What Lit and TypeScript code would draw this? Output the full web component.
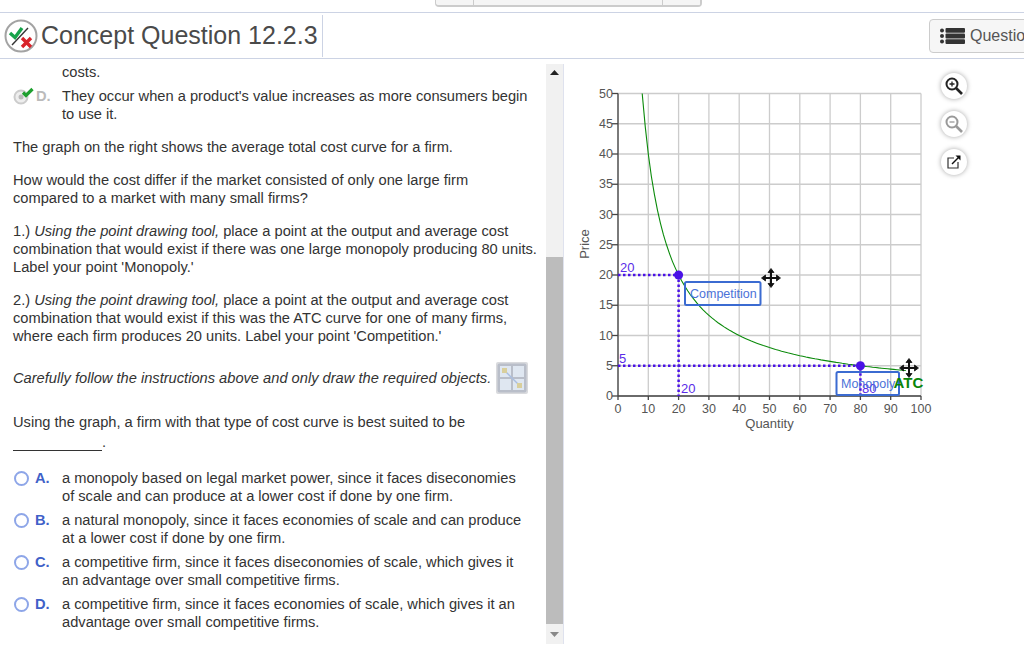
import { LitElement, html, css, svg } from "lit";
import { customElement } from "lit/decorators.js";

const X = (q: number) => 618 - 564 + q * 3.03;
const Y = (p: number) => 396 - 59 - p * 6.05;

const OPTIONS = [
  ["A.", "a monopoly based on legal market power, since it faces diseconomies", "of scale and can produce at a lower cost if done by one firm."],
  ["B.", "a natural monopoly, since it faces economies of scale and can produce", "at a lower cost if done by one firm."],
  ["C.", "a competitive firm, since it faces diseconomies of scale, which gives it", "an advantage over small competitive firms."],
  ["D.", "a competitive firm, since it faces economies of scale, which gives it an", "advantage over small competitive firms."],
];

function moveIcon(x: number, y: number) {
  return svg`<g transform="translate(${x} ${y})" class="move">
    <path d="M-7 0H7M0 -7V7" />
    <path class="head" d="M0 -9.5L-3 -5.5H3ZM0 9.5L-3 5.5H3ZM-9.5 0L-5.5 -3V3ZM9.5 0L5.5 -3V3Z" />
  </g>`;
}

@customElement("app-root")
export class AppRoot extends LitElement {
  static styles = css`
    :host { display: block; width: 1024px; height: 659px; overflow: hidden; background: #fff; font-family: "Liberation Sans", Arial, sans-serif; color: #333; }
    .tabs { display: flex; margin-left: 435px; width: 267px; height: 7px; box-sizing: border-box; background: #f5f5f5; border: 1px solid #ccc; border-top: 0; border-bottom-width: 2px; border-radius: 0 0 4px 4px; }
    .tabs i { display: block; width: 37px; border-right: 1px solid #ccc; }
    .tabs b { display: block; flex: 1; border-right: 1px solid #ccc; }
    .header { margin-top: 5px; height: 47px; box-sizing: border-box; border-top: 1px solid #ccd3e4; border-bottom: 1px solid #ccd3e4; display: flex; align-items: center; position: relative; }
    .logo { margin-left: 4px; width: 34px; height: 34px; flex: none; }
    .title { margin-left: 3px; font-size: 25px; color: #4a4a4a; white-space: nowrap; width: 281px; height: 42px; line-height: 40px; border-right: 1px solid #ccd3e4; flex: none; }
    .qbtn { margin-left: auto; width: 110px; margin-right: -15px; height: 34px; box-sizing: border-box; border: 1px solid #ccc; border-radius: 4px; background: #f6f6f6; display: flex; align-items: center; gap: 5px; padding-left: 10px; font-size: 16px; color: #555; flex: none; overflow: hidden; }
    .qbtn svg { flex: none; }
    .body { display: flex; height: 600px; }
    .left { width: 546px; flex: none; height: 585px; overflow: hidden; font-size: 14.67px; line-height: 18px; color: #333; padding: 4px 0 0 13px; box-sizing: border-box; }
    .opt { display: flex; align-items: flex-start; }
    .radio { width: 15px; height: 15px; border: 2px solid #8ea6e8; border-radius: 50%; box-sizing: border-box; margin: 2px 0 0 1px; flex: none; }
    .letter { font-weight: bold; color: #3f61c8; margin-left: 6px; width: 27px; flex: none; }
    .optext { white-space: nowrap; }
    .opts { margin-top: 18px; display: flex; flex-direction: column; gap: 6px; }
    .cont { margin-left: 49px; }
    .chosen { margin-top: 6px; }
    .chosen .letter { color: #bbb; margin-left: 9px; width: 26px; }
    .radio-wrap { width: 14px; height: 18px; flex: none; }
    p { margin: 0; white-space: nowrap; }
    .g1 { margin-top: 15px; }
    .g2 { margin-top: 15px; }
    .g3 { margin-top: 15px; }
    .g4 { margin-top: 15px; }
    .instr { display: flex; align-items: center; gap: 5px; margin-top: 17px; height: 32px; font-style: italic; }
    .ask { margin-top: 19px; }
    .blank { display: flex; align-items: flex-end; height: 20px; }
    .blank span { display: block; width: 89px; border-bottom: 1px solid #333; height: 16px; }
    em { font-style: italic; }
    .scroll { width: 18px; height: 580px; margin-top: 5px; flex: none; box-sizing: border-box; background: #f1f1f1; border-right: 1px solid #dfe2ee; display: flex; flex-direction: column; align-items: stretch; }
    .arrow { height: 20px; display: flex; align-items: center; justify-content: center; flex: none; box-sizing: border-box; }
    .up { padding-bottom: 4px; }
    .spacer { height: 173px; flex: none; }
    .thumb { height: 367px; background: #bcbcbc; flex: none; }
    .graph { width: 370px; height: 600px; flex: none; }
    .graph text { font-family: "Liberation Sans", Arial, sans-serif; }
    .grid { stroke: #ccc; stroke-width: 1.3; }
    .axis { stroke: #444; stroke-width: 1.3; }
    .tl { font-size: 12.5px; fill: #555; }
    .al { font-size: 13px; fill: #555; }
    .dots { stroke: #4a12e6; stroke-width: 2.5; stroke-dasharray: 2.5 2.5; fill: none; }
    .pt { fill: #4a12e6; }
    .plabel { font-size: 13px; fill: #5a2ce8; }
    .box { fill: none; stroke: #3b6bd1; stroke-width: 2; }
    .boxt { font-size: 12.5px; fill: #4b72d8; }
    .atc { font-size: 15px; font-weight: bold; fill: #0a850a; }
    .curve { fill: none; stroke: #0a8a0a; stroke-width: 1.1; }
    .move path { stroke: #111; stroke-width: 2; fill: none; }
    .move .head { fill: #111; stroke-width: 0.8; }
    .tools { display: flex; flex-direction: column; gap: 12px; padding-top: 14px; margin-left: 7px; }
    .tool { width: 26px; height: 26px; border-radius: 50%; background: #fff; box-shadow: 0 0 5px rgba(0,0,0,.35); display: flex; align-items: center; justify-content: center; }
  `;

  render() {
    const curve = [] as string[];
    for (let q = 8; q <= 95; q += 1) curve.push(`${X(q).toFixed(1)},${Y(400 / q).toFixed(1)}`);
    const qs = Array.from({ length: 11 }, (_, i) => i * 10);
    const ps = Array.from({ length: 11 }, (_, i) => i * 5);
    return html`
      <div class="tabs"><i></i><b></b><i></i></div>
      <div class="header">
        <svg class="logo" viewBox="0 0 34 34">
          <circle cx="17" cy="17" r="15.5" fill="#fff" stroke="#a3a3a3" stroke-width="2"/>
          <path d="M6 14L11 18.500L18 9" fill="none" stroke="#17a34a" stroke-width="3.4"/>
          <path d="M8 26L24 9" stroke="#333" stroke-width="1.4"/>
          <path d="M18 19L27 28M27 19L18 28" stroke="#d8232a" stroke-width="3.4"/>
        </svg>
        <div class="title">Concept Question 12.2.3</div>
        <div class="qbtn">
          <svg width="25" height="16" viewBox="0 0 25 16">
            <g fill="#333"><circle cx="2" cy="2.5" r="2"/><circle cx="2" cy="8" r="2"/><circle cx="2" cy="13.5" r="2"/><rect x="5.500" y="0" width="19.5" height="4.8" rx="1"/><rect x="5.500" y="5.600" width="19.5" height="4.8" rx="1"/><rect x="5.500" y="11.200" width="19.5" height="4.8" rx="1"/></g>
          </svg>
          Question
        </div>
      </div>
      <div class="body">
        <div class="left">
          <p class="cont">costs.</p>
          <div class="opt chosen">
            <div class="radio-wrap">
              <svg width="24" height="18" viewBox="0 0 24 18">
                <circle cx="8" cy="10" r="6.5" fill="#eee" stroke="#ccc" stroke-width="2"/>
                <circle cx="8" cy="10" r="2.5" fill="#bbb"/>
                <path d="M10 5.500L13 8.500L19.500 2" fill="none" stroke="#1fa02f" stroke-width="3.2"/>
              </svg>
            </div>
            <span class="letter">D.</span>
            <div class="optext">They occur when a product's value increases as more consumers begin<br>to use it.</div>
          </div>
          <p class="g1">The graph on the right shows the average total cost curve for a firm.</p>
          <p class="g2">How would the cost differ if the market consisted of only one large firm<br>compared to a market with many small firms?</p>
          <p class="g3">1.) <em>Using the point drawing tool,</em> place a point at the output and average cost<br>combination that would exist if there was one large monopoly producing 80 units.<br>Label your point 'Monopoly.'</p>
          <p class="g4">2.) <em>Using the point drawing tool,</em> place a point at the output and average cost<br>combination that would exist if this was the ATC curve for one of many firms,<br>where each firm produces 20 units. Label your point 'Competition.'</p>
          <div class="instr">
            <span>Carefully follow the instructions above and only draw the required objects.</span>
            <svg width="32" height="32" viewBox="0 0 32 32">
              <rect width="32" height="32" rx="2" fill="#d9dadd"/>
              <rect x="1.500" y="1.500" width="29" height="29" rx="2" fill="#b9bec9"/>
              <rect x="4" y="4" width="11" height="11" fill="#dfe7f1"/><rect x="17" y="4" width="11" height="11" fill="#dfe7f1"/>
              <rect x="4" y="17" width="11" height="11" fill="#dfe7f1"/><rect x="17" y="17" width="11" height="11" fill="#dfe7f1"/>
              <path d="M8 8L24 24" stroke="#a9bde0" stroke-width="1.5"/>
              <rect x="6" y="6" width="5" height="5" fill="#d9cf9c"/><rect x="21" y="21" width="5" height="5" fill="#d9cf9c"/>
            </svg>
          </div>
          <p class="ask">Using the graph, a firm with that type of cost curve is best suited to be</p>
          <div class="blank"><span></span>.</div>
          <div class="opts">
            ${OPTIONS.map(
              ([l, a, b]) => html`<div class="opt">
                <div class="radio"></div>
                <span class="letter">${l}</span>
                <div class="optext">${a}<br>${b}</div>
              </div>`
            )}
          </div>
        </div>
        <div class="scroll">
          <div class="arrow up"><svg width="9" height="5" viewBox="0 0 9 5"><path d="M4.5 0L9 5H0Z" fill="#222"/></svg></div>
          <div class="spacer"></div>
          <div class="thumb"></div>
          <div class="arrow"><svg width="9" height="5" viewBox="0 0 9 5"><path d="M0 0H9L4.5 5Z" fill="#888"/></svg></div>
        </div>
        <svg class="graph" viewBox="0 0 370 600" width="370" height="600">
          ${qs.map((q) => svg`<line class="grid" x1=${X(q)} x2=${X(q)} y1=${Y(50)} y2=${Y(0)} />`)}
          ${ps.map((p) => svg`<line class="grid" x1=${X(0)} x2=${X(100)} y1=${Y(p)} y2=${Y(p)} />`)}
          <line class="axis" x1=${X(0)} x2=${X(0)} y1=${Y(50)} y2=${Y(0)} />
          <line class="axis" x1=${X(0)} x2=${X(100)} y1=${Y(0)} y2=${Y(0)} />
          ${ps.map((p) => svg`<line class="axis" x1=${X(0) - 6} x2=${X(0)} y1=${Y(p)} y2=${Y(p)} />
            <text class="tl" x=${X(0) - 5} y=${Y(p) + 4} text-anchor="end">${p}</text>`)}
          ${qs.map((q) => svg`<line class="axis" x1=${X(q)} x2=${X(q)} y1=${Y(0)} y2=${Y(0) + 4} />
            <text class="tl" x=${X(q)} y=${Y(0) + 17} text-anchor="middle">${q}</text>`)}
          <text class="al" x=${X(50)} y="369" text-anchor="middle">Quantity</text>
          <text class="al" transform="translate(25 185) rotate(-90)" text-anchor="middle">Price</text>
          <polyline class="curve" points=${curve.join(" ")} />
          <path class="dots" d="M${X(0)} ${Y(20)}H${X(20)}V${Y(0)}" />
          <path class="dots" d="M${X(0)} ${Y(5)}H${X(80)}V${Y(0)}" />
          <circle class="pt" cx=${X(20)} cy=${Y(20)} r="4.5" />
          <circle class="pt" cx=${X(80)} cy=${Y(5)} r="4.5" />
          <text class="plabel" x="56" y="213">20</text>
          <text class="plabel" x="55" y="304">5</text>
          <text class="plabel" x="117" y="334">20</text>
          <text class="plabel" x="298" y="334">80</text>
          <rect class="box" x="121" y="223" width="75.5" height="23" rx="1.5" />
          <text class="boxt" x="126" y="239">Competition</text>
          <rect class="box" x="272.500" y="313" width="62.5" height="23" rx="1.5" />
          <text class="boxt" x="277" y="329">Monopoly</text>
          <text class="atc" x="329.5" y="329">ATC</text>
          ${moveIcon(207, 219)}
          ${moveIcon(345, 309)}
        </svg>
        <div class="tools">
          <div class="tool">
            <svg width="20" height="20" viewBox="0 0 20 20"><circle cx="8" cy="8" r="5.5" fill="none" stroke="#222" stroke-width="2"/><path d="M12 12L18 18" stroke="#222" stroke-width="2.6"/><path d="M5.500 8H10.500M8 5.500V10.500" stroke="#222" stroke-width="1.3"/></svg>
          </div>
          <div class="tool">
            <svg width="20" height="20" viewBox="0 0 20 20"><circle cx="8" cy="8" r="5.5" fill="none" stroke="#999" stroke-width="2"/><path d="M12 12L18 18" stroke="#999" stroke-width="2.6"/><path d="M5.500 8H10.500" stroke="#999" stroke-width="1.3"/></svg>
          </div>
          <div class="tool">
            <svg width="16" height="16" viewBox="0 0 16 16"><path d="M8 4H2V14H12V8" fill="none" stroke="#333" stroke-width="1.2"/><path d="M6 10L13 3" stroke="#111" stroke-width="1.4"/><path d="M9.500 1.500H14.500V6.500Z" fill="#111"/></svg>
          </div>
        </div>
      </div>
    `;
  }
}
